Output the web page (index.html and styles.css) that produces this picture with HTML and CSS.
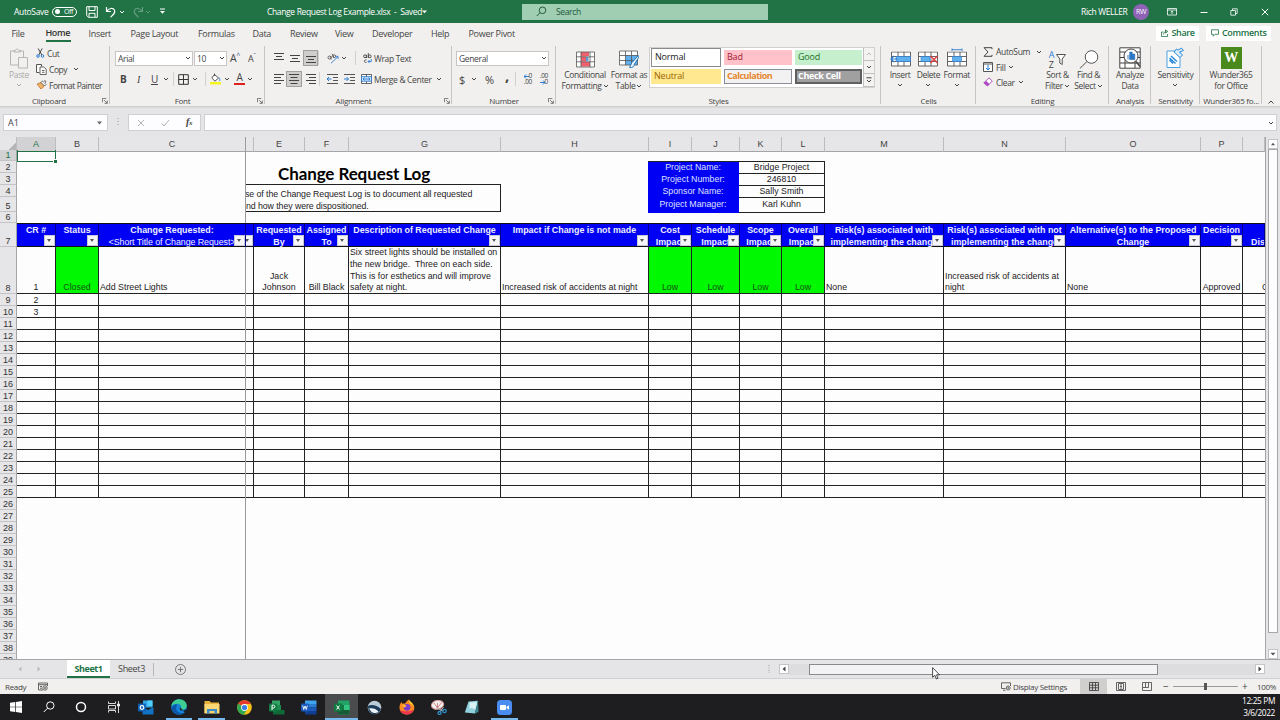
FILE: index.html
```html
<!DOCTYPE html>
<html lang="en">
<head>
    <meta charset="UTF-8">
    <meta name="viewport" content="width=device-width, initial-scale=1.0">
    <title>Change Request Log Example.xlsx</title>
    <link rel="stylesheet" href="styles.css">
</head>
<body>
    <svg class="defs" width="0" height="0">
        <symbol id="chev" viewBox="0 0 6 4"><path d="M1 1l2 2 2-2" fill="none" stroke="currentColor" stroke-width="1"/></symbol>
        <symbol id="launch" viewBox="0 0 7 7"><path d="M.5 5V.5H5M2.5 2.5l3.5 3.500M6.200 3v3.200H3" fill="none" stroke="#555" stroke-width=".9"/></symbol>
        <symbol id="cellgrid" viewBox="0 0 20 16"><path d="M.5 .5h19v14h-19zM.500 5h19M.5 10h19M7 .5v14M13 .5v14" fill="#fff" stroke="#555" stroke-width=".9"/></symbol>
    </svg>

    <div class="titlebar">
        <span class="t-autosave">AutoSave</span>
        <span class="toggle"><i></i>Off</span>
        <svg width="12" height="12" viewBox="0 0 12 12" fill="none" stroke="#fff"><path d="M.7.7h10.600v10.600H2.500L.7 9.500zM3 .7v3.800h6V.7M3 11V7.300h6V11"/></svg>
        <svg width="12" height="12" viewBox="0 0 12 12" fill="none" stroke="#fff" stroke-width="1.200"><path d="M1.500 1v4.500H6M1.800 5.200C4 2 8 1.500 9.500 4.200c1.200 2.500-1 4.300-4 7"/></svg>
        <svg class="chev" width="6" height="4"><use href="#chev"/></svg>
        <svg class="dim" width="12" height="12" viewBox="0 0 12 12" fill="none" stroke="#fff" stroke-width="1.200"><path d="M10.500 1v4.500H6M10.200 5.200C8 2 4 1.500 2.500 4.200c-1.200 2.500 1 4.300 4 7"/></svg>
        <svg class="chev dim" width="6" height="4"><use href="#chev"/></svg>
        <svg width="7" height="7" viewBox="0 0 7 7"><path d="M1 1h5" stroke="#fff"/><path d="M1 3h5L3.500 5.800z" fill="#fff"/></svg>
        <span class="t-name">Change Request Log Example.xlsx&nbsp; - &nbsp;Saved</span>
        <svg width="5" height="4" viewBox="0 0 5 4"><path d="M0 .5h5L2.500 3.200z" fill="#fff"/></svg>
        <div class="search">
            <svg width="11" height="11" viewBox="0 0 11 11" fill="none" stroke="#23583d"><circle cx="6.500" cy="4.300" r="3.300"/><path d="M4 6.800L.8 10"/></svg>
            <span>Search</span>
        </div>
        <span class="t-user">Rich WELLER</span>
        <span class="avatar">RW</span>
        <svg width="10" height="8" viewBox="0 0 10 8" fill="none" stroke="#fff"><path d="M.5.5h9v6.500h-9zM.5 2h9M5 6V3.200M3.700 4.300L5 3.100l1.300 1.200" stroke-width=".8"/></svg>
        <svg width="8" height="8" viewBox="0 0 8 8"><path d="M.5 4.500h7" stroke="#fff"/></svg>
        <svg width="8" height="8" viewBox="0 0 8 8" fill="none" stroke="#fff" stroke-width=".8"><path d="M.8 2.500h4.700v4.700H.8zM2.500 2.500V.8h4.700v4.700H5.500"/></svg>
        <svg width="8" height="8" viewBox="0 0 8 8"><path d="M.8.8l6.400 6.400M7.200.8L.8 7.200" stroke="#fff"/></svg>
    </div>

    <div class="tabs">
        <span>File</span><span class="active">Home</span><span>Insert</span><span>Page Layout</span><span>Formulas</span><span>Data</span><span>Review</span><span>View</span><span>Developer</span><span>Help</span><span>Power Pivot</span>
        <button class="share"><svg width="8" height="8" viewBox="0 0 8 8" fill="none" stroke="#217346" stroke-width=".8"><path d="M2.500 3H.5v4.500h6V5M2.500 5.500c0-2 1.500-3 3-3M4.500.8l2.300 1.700-2.300 1.700z"/></svg>Share</button>
        <button class="comments"><svg width="8" height="8" viewBox="0 0 8 8" fill="none" stroke="#217346" stroke-width=".8"><path d="M.5.8h7v4.500H4L2.200 7.200V5.300H.5z"/></svg>Comments</button>
    </div>

    <div class="ribbon">
        <div class="group g-clip">
            <div class="body">
                <div class="big paste">
                    <svg width="20" height="21" viewBox="0 0 20 21" fill="#f1f0ee" stroke="#b5b5b5"><path d="M1.500 3h13v14h-13z"/><path d="M5 4V2.500h1.500C7 .5 9.500.5 10 2.500h1.500V4z"/><path d="M9.500 9.500h9v10.500h-9z"/></svg>
                    <span>Paste</span>
                    <svg class="chev" width="6" height="4"><use href="#chev"/></svg>
                </div>
                <div class="lines">
                    <div><svg width="9" height="10" viewBox="0 0 9 10" fill="none"><path d="M2.200.5l3.600 6.500M6.200.5L2.700 7" stroke="#444"/><circle cx="2" cy="8" r="1.300" stroke="#2b7cd3"/><circle cx="6.500" cy="8" r="1.300" stroke="#2b7cd3"/></svg>Cut</div>
                    <div><svg width="11" height="11" viewBox="0 0 11 11" fill="#fff" stroke="#555"><path d="M3.500 8.500h-3v-8h5v2"/><path d="M4 3h3.800L10.200 5.300v5.200H4zM6 6.500h2.500M6 8.300h2.500" stroke-width=".9"/></svg>Copy<svg class="chev" width="6" height="4"><use href="#chev"/></svg></div>
                    <div><svg width="11" height="10" viewBox="0 0 11 10"><path d="M1 4l4 5 3.500-3L5 2.500z" fill="#f2b168" stroke="#b5651d" stroke-width=".7"/><path d="M5 2.500L8.500 6 10 4.500 8.800 3.300 10 1.500 9 .6 7.300 1.900 6.400 1z" fill="#fff" stroke="#444" stroke-width=".8"/></svg>Format Painter</div>
                </div>
            </div>
            <div class="caption">Clipboard<svg class="launch" width="6" height="6"><use href="#launch"/></svg></div>
        </div>

        <div class="group g-font">
            <div class="body">
                <div class="row font1">
                    <div class="combo">Arial<svg class="chev" width="6" height="4"><use href="#chev"/></svg></div>
                    <div class="combo">10<svg class="chev" width="6" height="4"><use href="#chev"/></svg></div>
                    <span class="grow">A<sup>^</sup></span><span class="grow small">A<sup>ˇ</sup></span>
                </div>
                <div class="row font2">
                    <b>B</b><i class="ital">I</i><u>U</u><svg class="chev" width="6" height="4"><use href="#chev"/></svg><em class="vsep"></em>
                    <svg width="11" height="11" viewBox="0 0 11 11" fill="none" stroke="#333"><path d="M.7.7h9.600v9.600H.7zM5.500.7v9.600M.7 5.500h9.600"/></svg>
                    <svg class="chev" width="6" height="4"><use href="#chev"/></svg><em class="vsep"></em>
                    <svg width="11" height="12" viewBox="0 0 11 12"><path d="M4.500 1.500l4 3.500-3.500 3.200L1.800 5zM4.500 3V.5" fill="#fff" stroke="#444" stroke-width=".9"/><path d="M9 4.500c1 1.500 1.200 3 .3 3.500" stroke="#2b7cd3" fill="none"/><path d="M0 9h11v2.500H0z" fill="#f5f51d"/></svg>
                    <svg class="chev" width="6" height="4"><use href="#chev"/></svg>
                    <span class="fcolor">A</span>
                    <svg class="chev" width="6" height="4"><use href="#chev"/></svg>
                </div>
            </div>
            <div class="caption">Font<svg class="launch" width="6" height="6"><use href="#launch"/></svg></div>
        </div>

        <div class="group g-align">
            <div class="body">
                <div class="row align1">
                    <span><svg width="10" height="12" viewBox="0 0 10 12" stroke="#444"><path d="M0 1.500h10M2 4.500h6M0 7.500h10"/></svg></span>
                    <span><svg width="10" height="12" viewBox="0 0 10 12" stroke="#444"><path d="M0 3.500h10M2 6.500h6M0 9.500h10"/></svg></span>
                    <span class="on"><svg width="10" height="12" viewBox="0 0 10 12" stroke="#444"><path d="M0 4.500h10M2 7.500h6M0 10.500h10"/></svg></span>
                    <em class="vsep"></em>
                    <span><svg width="12" height="11" viewBox="0 0 12 11" fill="none" stroke="#555" stroke-width=".9"><circle cx="2.500" cy="4.500" r="1.500"/><path d="M4 3v3.500M5 .8l2 4"/><circle cx="7.200" cy="3.200" r="1.400"/><path d="M4 10.300L11 3.500M8.500 3.300H11V6" stroke="#2b7cd3"/></svg></span>
                    <svg class="chev" width="6" height="4"><use href="#chev"/></svg><em class="vsep"></em>
                    <span class="txt"><svg width="9" height="11" viewBox="0 0 9 11" fill="none" stroke="#444" stroke-width=".9"><circle cx="2" cy="3.300" r="1.400"/><path d="M3.600 1.800v3.200M5.300 0v5"/><circle cx="6.800" cy="3.300" r="1.400"/><path d="M3.500 7C1 6.500 0 9.500 3.500 9.500"/><path d="M8.300 6v2.500H5M6.500 7L5 8.500 6.500 10" stroke="#2b7cd3"/></svg>Wrap Text</span>
                </div>
                <div class="row align2">
                    <span><svg width="10" height="11" viewBox="0 0 10 11" stroke="#444"><path d="M0 .5h10M0 3.500h7M0 6.500h10M0 9.500h7"/></svg></span>
                    <span class="on"><svg width="10" height="11" viewBox="0 0 10 11" stroke="#444"><path d="M0 .5h10M1.500 3.500h7M0 6.500h10M1.500 9.500h7"/></svg></span>
                    <span><svg width="10" height="11" viewBox="0 0 10 11" stroke="#444"><path d="M0 .5h10M3 3.500h7M0 6.500h10M3 9.500h7"/></svg></span>
                    <em class="vsep"></em>
                    <span><svg width="11" height="10" viewBox="0 0 11 10" fill="none" stroke="#555"><path d="M0 .5h11M6 3.500h5M6 6.500h5M0 9.500h11"/><path d="M0 5h4.500M2 3L0 5l2 2" stroke="#2b7cd3"/></svg></span>
                    <span><svg width="11" height="10" viewBox="0 0 11 10" fill="none" stroke="#555"><path d="M0 .5h11M6 3.500h5M6 6.500h5M0 9.500h11"/><path d="M0 5h4.500M2.500 3l2 2-2 2" stroke="#2b7cd3"/></svg></span>
                    <em class="vsep ghost"></em>
                    <span class="txt"><svg width="11" height="10" viewBox="0 0 11 10" fill="#fff" stroke="#555" stroke-width=".9"><path d="M.5.5h10v9H.5zM5.500.5v9"/><path d="M.5 2.700h10v4.500H.5z" fill="#d5e8f8" stroke="#2b7cd3"/><path d="M2 5h7M3.500 3.700L2 5l1.500 1.300M7.500 3.700L9 5 7.500 6.300" stroke="#2b7cd3" fill="none"/></svg>Merge &amp; Center</span>
                    <svg class="chev" width="6" height="4"><use href="#chev"/></svg>
                </div>
            </div>
            <div class="caption">Alignment<svg class="launch" width="6" height="6"><use href="#launch"/></svg></div>
        </div>

        <div class="group g-num">
            <div class="body">
                <div class="row num1"><div class="combo">General<svg class="chev" width="6" height="4"><use href="#chev"/></svg></div></div>
                <div class="row num2">
                    <span class="sym">$</span><svg class="chev" width="6" height="4"><use href="#chev"/></svg><span class="sym">%</span><span class="sym comma">,</span><em class="vsep"></em>
                    <span class="dec"><span><svg width="5" height="5" viewBox="0 0 5 5"><path d="M0 2.500h5M2 .5l-2 2 2 2" stroke="#2b7cd3" fill="none"/></svg>0</span><span>.00</span></span>
                    <span class="dec"><span>.00</span><span><svg width="5" height="5" viewBox="0 0 5 5"><path d="M0 2.500h5M3 .5l2 2-2 2" stroke="#2b7cd3" fill="none"/></svg>0</span></span>
                </div>
            </div>
            <div class="caption">Number<svg class="launch" width="6" height="6"><use href="#launch"/></svg></div>
        </div>

        <div class="group g-styles">
            <div class="body">
                <div class="big">
                    <svg width="19" height="16" viewBox="0 0 19 16"><path d="M.5.5h18v15H.5z" fill="#fff"/><path d="M5 .5h8v4H5zM5 5h5v5H5zM5 10.500h9v4.500H5z" fill="#f0616d"/><path d="M10 5.500h2.500v4H10z" fill="#5b9bd5"/><path d="M.5.5h18v15H.5zM.5 5.300h18M.5 10.300h18M5 .5v15M14 .5v15" fill="none" stroke="#555" stroke-width=".8"/></svg>
                    <span>Conditional</span><span>Formatting<svg class="chev" width="6" height="4"><use href="#chev"/></svg></span>
                </div>
                <div class="big">
                    <svg width="20" height="18" viewBox="0 0 20 18"><path d="M.5.5h18v14H.5z" fill="#fff"/><path d="M6.500 5h12v9.500h-12z" fill="#5fb0ee"/><path d="M.5.5h18v14H.5zM.5 5h18M.5 10h18M6.500.5v14M12.500.5v14" fill="none" stroke="#555" stroke-width=".8"/><path d="M19.300 5L13 12l-2.500 5c3 .5 5-1 4.800-3.300L20 6.500z" fill="#e9f4fd" stroke="#1d6fb8" stroke-width=".9"/></svg>
                    <span>Format as</span><span>Table<svg class="chev" width="6" height="4"><use href="#chev"/></svg></span>
                </div>
                <div class="gallery">
                    <div class="swatches">
                        <span class="normal">Normal</span><span class="bad">Bad</span><span class="good">Good</span>
                        <span class="neutral">Neutral</span><span class="calc">Calculation</span><span class="check">Check Cell</span>
                    </div>
                    <div class="spin">
                        <span class="off"><svg width="6" height="4" viewBox="0 0 6 4"><path d="M1 3l2-2 2 2" fill="none" stroke="currentColor"/></svg></span>
                        <span><svg width="6" height="4"><use href="#chev"/></svg></span>
                        <span><svg width="6" height="6" viewBox="0 0 6 6"><path d="M.5.800h5M1 3l2 2 2-2" fill="none" stroke="#444"/></svg></span>
                    </div>
                </div>
            </div>
            <div class="caption">Styles</div>
        </div>

        <div class="group g-cells">
            <div class="body">
                <div class="big">
                    <svg width="21" height="16" viewBox="0 0 21 16"><use href="#cellgrid" width="20" height="16" x="1"/><path d="M6 5h14.500v5H6z" fill="#5fb0ee" stroke="#2b7cd3" stroke-width=".6"/><path d="M7.500 7.500H1M4 4.500l-3 3 3 3" fill="none" stroke="#2b7cd3" stroke-width="1.200"/></svg>
                    <span>Insert</span><svg class="chev" width="6" height="4"><use href="#chev"/></svg>
                </div>
                <div class="big">
                    <svg width="20" height="16" viewBox="0 0 20 16"><use href="#cellgrid" width="20" height="16"/><path d="M3 5h9v5H3z" fill="#5fb0ee" stroke="#2b7cd3" stroke-width=".6"/><path d="M12.500 4.500l7 7M19.500 4.500l-7 7" stroke="#e23b3b" stroke-width="1.300"/></svg>
                    <span>Delete</span><svg class="chev" width="6" height="4"><use href="#chev"/></svg>
                </div>
                <div class="big up">
                    <svg width="20" height="19" viewBox="0 0 20 19"><use href="#cellgrid" width="20" height="16" y="3"/><path d="M5.500 8h9v5h-9z" fill="#5fb0ee" stroke="#2b7cd3" stroke-width=".6"/><path d="M5 1.200h10M5 0v2.500M15 0v2.500" stroke="#2b7cd3" stroke-width=".9"/></svg>
                    <span>Format</span><svg class="chev" width="6" height="4"><use href="#chev"/></svg>
                </div>
            </div>
            <div class="caption">Cells</div>
        </div>

        <div class="group g-edit">
            <div class="body">
                <div class="lines">
                    <div><svg width="10" height="10" viewBox="0 0 10 10" fill="none" stroke="#444"><path d="M9 2.200V.700H1L5 5 1 9.300h8V7.800"/></svg>AutoSum<svg class="chev far" width="6" height="4"><use href="#chev"/></svg></div>
                    <div><svg width="10" height="10" viewBox="0 0 10 10" fill="#fff" stroke="#555"><path d="M.5.5h9v9h-9z"/><path d="M.5 2h9" /><path d="M5 3v5M3 6l2 2 2-2" fill="none" stroke="#2b7cd3"/></svg>Fill<svg class="chev" width="6" height="4"><use href="#chev"/></svg></div>
                    <div><svg width="10" height="10" viewBox="0 0 10 10"><path d="M.8 6L6 .8 9.300 4 4.500 9z" fill="#fff" stroke="#a33fb5" stroke-width=".9"/><path d="M.8 6L3 3.800 6.500 7 4.500 9z" fill="#b04bc4"/></svg>Clear<svg class="chev" width="6" height="4"><use href="#chev"/></svg></div>
                </div>
                <div class="big sort">
                    <div class="az"><span><b>A</b><b>Z</b></span><svg width="10" height="12" viewBox="0 0 10 12"><path d="M.5.5h9L6.200 5v5.500L3.800 9V5z" fill="#fff" stroke="#555"/></svg></div>
                    <span>Sort &amp;</span><span>Filter<svg class="chev" width="6" height="4"><use href="#chev"/></svg></span>
                </div>
                <div class="big find">
                    <svg width="20" height="19" viewBox="0 0 20 19" fill="none" stroke="#555"><circle cx="12.500" cy="7" r="6.300" fill="#fff"/><path d="M8 11.500L.8 18.500"/></svg>
                    <span>Find &amp;</span><span>Select<svg class="chev" width="6" height="4"><use href="#chev"/></svg></span>
                </div>
            </div>
            <div class="caption">Editing</div>
        </div>

        <div class="group g-ana">
            <div class="body">
                <div class="big up">
                    <svg width="22" height="22" viewBox="0 0 22 22"><path d="M.8.8h20.400v20.400H.8zM.8 5h20.400M.8 10.500h20.400M.8 16h20.400M6 5v16M16 5v16" fill="#fff" stroke="#444"/><circle cx="12" cy="9" r="7" fill="#fff" stroke="#444"/><path d="M17 14.500l4 5" stroke="#444" stroke-width="1.500"/><path d="M8 8h2.500v4.500H8z" fill="#9bbfe0"/><path d="M10.700 5h2.500v7.500h-2.500zM13.500 7h2.300v5.500h-2.300z" fill="#2b7cd3" stroke="#185a9d" stroke-width=".5"/></svg>
                    <span>Analyze</span><span>Data</span>
                </div>
            </div>
            <div class="caption">Analysis</div>
        </div>

        <div class="group g-sens">
            <div class="body">
                <div class="big up">
                    <svg width="18" height="21" viewBox="0 0 18 21"><path d="M1 3.500h13v16.500H1z" fill="#fff" stroke="#4aa0e0"/><path d="M3.500 10.500l6 5.500M5 8.500l6 5.500M3.500 12.500L7 16" stroke="#2b8bd8" stroke-width="1.500"/><path d="M8 4.500l6 5.500 2.500-2.500-3-3L17.500 3 15.500.6l-3.500 2L10.500 1.500z" fill="#d9ecfb" stroke="#2b8bd8"/></svg>
                    <span>Sensitivity</span><svg class="chev" width="6" height="4"><use href="#chev"/></svg>
                </div>
            </div>
            <div class="caption">Sensitivity</div>
        </div>

        <div class="group g-wun">
            <div class="body">
                <div class="big up">
                    <div class="wlogo">W</div>
                    <span>Wunder365</span><span>for Office</span>
                </div>
            </div>
            <div class="caption">Wunder365 fo...</div>
        </div>
        <svg class="collapse" width="6" height="4" viewBox="0 0 6 4"><path d="M.5 3.500L3 1l2.500 2.500" fill="none" stroke="#444"/></svg>
    </div>

    <div class="formulabar">
        <div class="namebox">A1<svg width="5" height="4" viewBox="0 0 5 4"><path d="M0 .5h5L2.500 3.500z" fill="#666"/></svg></div>
        <svg class="dots" width="2" height="9" viewBox="0 0 2 9"><path d="M1 0v9" stroke="#999" stroke-dasharray="1 2"/></svg>
        <div class="fxbox">
            <svg width="8" height="8" viewBox="0 0 8 8"><path d="M1 1l6 6M7 1L1 7" stroke="#b5b5b5"/></svg>
            <svg width="9" height="8" viewBox="0 0 9 8"><path d="M.8 4.500L3 7l5-6" stroke="#b5b5b5" fill="none"/></svg>
            <i>f<small>x</small></i>
        </div>
        <div class="formula"><svg width="6" height="4"><use href="#chev"/></svg></div>
    </div>

    <div class="workarea">
        <div class="sheet">
            <div class="cols" id="colHeads"></div>
            <div class="top">
                <div class="topnums"><span class="sel">1</span><span>2</span><span>3</span><span>4</span><span>5</span><span>6</span></div>
                <div class="frozen"><div class="cursorcell"><i></i></div></div>
                <div class="intro">
                    <h1>Change Request Log</h1>
                    <p>se of the Change Request Log is to document all requested<br>nd how they were dispositioned.</p>
                </div>
                <div class="project">
                    <span>Project Name:</span><span>Bridge Project</span>
                    <span>Project Number:</span><span>246810</span>
                    <span>Sponsor Name:</span><span>Sally Smith</span>
                    <span>Project Manager:</span><span>Karl Kuhn</span>
                </div>
            </div>
            <div class="cols heads">
                <span class="num">7</span>
                <div>CR #<i class="filter"></i></div>
                <div>Status<i class="filter"></i></div>
                <div class="freeze">Change Requested:<br><span class="sub">&lt;Short Title of Change Request&gt;</span><i class="filter"></i></div>
                <div><i class="filter"></i></div>
                <div>Requested<br>By<i class="filter"></i></div>
                <div>Assigned<br>To<i class="filter"></i></div>
                <div>Description of Requested Change<i class="filter"></i></div>
                <div>Impact if Change is not made<i class="filter"></i></div>
                <div>Cost<br>Impact<i class="filter"></i></div>
                <div>Schedule<br>Impact<i class="filter"></i></div>
                <div>Scope<br>Impact<i class="filter"></i></div>
                <div>Overall<br>Impact<i class="filter"></i></div>
                <div>Risk(s) associated with<br>implementing the change<i class="filter"></i></div>
                <div>Risk(s) associated with not<br>implementing the change<i class="filter"></i></div>
                <div>Alternative(s) to the Proposed<br>Change<i class="filter"></i></div>
                <div>Decision<i class="filter"></i></div>
                <div class="last"><br>Disp</div>
            </div>
            <div class="cols line first">
                <span class="num">8</span>
                <div class="c">1</div>
                <div class="c green">Closed</div>
                <div class="freeze">Add Street Lights</div>
                <div></div>
                <div class="c">Jack<br>Johnson</div>
                <div class="c">Bill Black</div>
                <div>Six street lights should be installed on<br>the new bridge.&nbsp; Three on each side.<br>This is for esthetics and will improve<br>safety at night.</div>
                <div>Increased risk of accidents at night</div>
                <div class="c green">Low</div>
                <div class="c green">Low</div>
                <div class="c green">Low</div>
                <div class="c green">Low</div>
                <div>None</div>
                <div>Increased risk of accidents at<br>night</div>
                <div>None</div>
                <div class="c">Approved</div>
                <div class="last">C</div>
            </div>
            <div id="rows"></div>
        </div>
        <div class="vscroll">
            <span class="sbtn"><svg width="6" height="4" viewBox="0 0 6 4"><path d="M1 3.200h4L3 .8z" fill="#555"/></svg></span>
            <span class="vthumb"></span>
            <span class="sbtn"><svg width="6" height="4" viewBox="0 0 6 4"><path d="M.5.8h5L3 3.500z" fill="#555"/></svg></span>
        </div>
    </div>

    <div class="sheettabs">
        <div class="navs"><svg width="4" height="6" viewBox="0 0 4 6"><path d="M3.500.5v5L.5 3z" fill="#bbb"/></svg><svg width="4" height="6" viewBox="0 0 4 6"><path d="M.5.500v5l3-2.500z" fill="#bbb"/></svg></div>
        <span class="stab active">Sheet1</span>
        <span class="stab">Sheet3</span>
        <svg class="add" width="11" height="11" viewBox="0 0 11 11" fill="none" stroke="#777"><circle cx="5.500" cy="5.500" r="5"/><path d="M5.500 2.800v5.400M2.800 5.500h5.400"/></svg>
        <div class="hscroll">
            <svg width="2" height="8" viewBox="0 0 2 8"><path d="M1 0v8" stroke="#999" stroke-dasharray="1 1.500"/></svg>
            <span class="sbtn"><svg width="4" height="6" viewBox="0 0 4 6"><path d="M3.500.5v5L.5 3z" fill="#444"/></svg></span>
            <span class="htrack"><span class="hthumb"></span></span>
            <span class="sbtn"><svg width="4" height="6" viewBox="0 0 4 6"><path d="M.5.500v5l3-2.500z" fill="#444"/></svg></span>
        </div>
    </div>

    <div class="status">
        <span>Ready</span>
        <svg width="10" height="9" viewBox="0 0 10 9" fill="none" stroke="#555" stroke-width=".9"><path d="M5 8H.5V1h9v3M.5 2.700h9M2 4.500h2M2 6.200h2"/><circle cx="7" cy="6" r="2.200"/><circle cx="7" cy="6" r=".6"/></svg>
        <svg width="10" height="9" viewBox="0 0 10 9" fill="none" stroke="#555" stroke-width=".9"><path d="M4.500 6.500H.5V.8h9V4M2 8.300h2.500"/><circle cx="7.200" cy="6" r="2"/><circle cx="7.200" cy="6" r=".5"/></svg>
        <span>Display Settings</span>
        <span class="view on"><svg width="10" height="9" viewBox="0 0 10 9" fill="none" stroke="#444" stroke-width=".9"><path d="M.5.5h9v8h-9zM.5 3.200h9M.5 5.800h9M3.500.5v8M6.500.5v8"/></svg></span>
        <span class="view"><svg width="10" height="9" viewBox="0 0 10 9" fill="none" stroke="#555" stroke-width=".9"><path d="M.5.5h9v8h-9zM2.500 1.500h5v6h-5zM4 3h2M4 4.500h2M4 6h2"/></svg></span>
        <span class="view"><svg width="10" height="9" viewBox="0 0 10 9" fill="none" stroke="#555" stroke-width=".9"><path d="M.5.5h9v8h-9zM3.500.5v5M6.500.5v5M.5 5.500h6"/></svg></span>
        <span class="zoombtn">−</span>
        <span class="slider"><i></i></span>
        <span class="zoombtn">+</span>
        <span>100%</span>
    </div>

    <div class="taskbar">
        <span><svg width="12" height="12" viewBox="0 0 12 12" fill="#fff"><path d="M0 1.700l5.300-.7v4.700H0zM6 .9L12 0v5.700H6zM0 6.300h5.300V11L0 10.300zM6 6.300h6V12l-6-.9z"/></svg></span>
        <span><svg width="12" height="12" viewBox="0 0 12 12" fill="none" stroke="#fff"><circle cx="7.300" cy="4.500" r="3.700"/><path d="M4.600 7.200L.8 11"/></svg></span>
        <span><svg width="12" height="12" viewBox="0 0 12 12"><circle cx="6" cy="6" r="4.500" fill="none" stroke="#fff" stroke-width="1.500"/></svg></span>
        <span><svg width="12" height="12" viewBox="0 0 12 12" fill="none" stroke="#eee" stroke-width=".9"><path d="M.5.500v2h7v-2M.5 4.500h7v3.500h-7zM.5 11.500v-2h7v2M10.500 0v12"/><path d="M9.500 3h2v2h-2z" fill="#eee"/></svg></span>
        <span><svg width="16" height="15" viewBox="0 0 16 15"><path d="M5 .5h9.500v7H5z" fill="#35a7e8"/><path d="M9.500.5h5V6h-5z" fill="#50d0ff"/><path d="M4.500 7L10 10l5.500-3v7.500h-11z" fill="#1173c4"/><rect y="3.500" width="8" height="8" rx="1" fill="#0f62b5"/><circle cx="4" cy="7.500" r="1.800" fill="none" stroke="#fff" stroke-width="1.200"/></svg></span>
        <span class="open"><svg width="16" height="16" viewBox="0 0 16 16"><circle cx="8" cy="8" r="7.800" fill="#1683d8"/><path d="M.3 7C1 2.500 4.500.2 8.300.2c4.500 0 7.500 3.300 7.500 6.300 0 2.800-2 4-4 4-1.500 0-2.300-.5-2-1.200C11 7 9 4.800 6.300 4.800 3.500 4.800 1 6 .3 7z" fill="#3ccf91"/><path d="M5.500 7.500C4 11 7 15 12.500 14.200 9 17 2.500 15.500 1 10.500.500 7.500 3 5.300 6 5.300c-.5.700-.5 1.500-.5 2.200z" fill="#0b56a6"/><path d="M8.500 7.500c.8.8.6 2 .2 2.800 1 1.500 4 1.700 6.300.2.500 1-.5 2-1.500 2.700" fill="#1e1d1f"/></svg></span>
        <span class="open"><svg width="16" height="14" viewBox="0 0 16 14"><path d="M.5 1h5l1.500 1.500h8V13H.5z" fill="#e8b33a"/><path d="M.5 4h15v9.500H.5z" fill="#fbd873"/><path d="M3 13.500V9h10v4.500h-2.500V11h-5v2.500z" fill="#3c8ccc"/></svg></span>
        <span><svg width="15" height="15" viewBox="0 0 15 15"><circle cx="7.500" cy="7.500" r="7.300" fill="#fbc116"/><path d="M7.500 7.500L1.200 3.800A7.300 7.300 0 0 1 13.900 4H7.500z" fill="#e33b2e"/><path d="M7.500 7.500L1.200 3.800A7.300 7.300 0 0 0 6.800 14.800l3.200-5z" fill="#2da94f"/><circle cx="7.500" cy="7.500" r="3.400" fill="#fff"/><circle cx="7.500" cy="7.500" r="2.600" fill="#3b7de8"/></svg></span>
        <span><svg width="16" height="15" viewBox="0 0 16 15"><path d="M3 .5h8v5H3z" fill="#33a366"/><path d="M7 5h5v5H7z" fill="#1f8a4f"/><path d="M4 10h11.500v4.500H4z" fill="#0f6a38"/><rect y="3.500" width="8" height="8" rx="1" fill="#107c41"/><path d="M3 10V5.200h1.500a1.300 1.300 0 0 1 0 2.800H3" fill="none" stroke="#fff"/></svg></span>
        <span><svg width="16" height="15" viewBox="0 0 16 15"><path d="M4 .5h11.500V4H4z" fill="#41a5ee"/><path d="M4 4h11.500v3.500H4z" fill="#2b7cd3"/><path d="M4 7.500h11.500V11H4z" fill="#185abd"/><path d="M4 11h11.500v3.500H4z" fill="#103f91"/><rect y="3.500" width="8" height="8" rx="1" fill="#185abd"/><path d="M1.700 5.500l1 4L4 6l1.300 3.500 1-4" fill="none" stroke="#fff" stroke-width=".9"/></svg></span>
        <span class="open current"><svg width="16" height="15" viewBox="0 0 16 15"><path d="M4 .5h11.500v14H4z" fill="#21a366"/><path d="M4 5h6v5H4z" fill="#107c41"/><path d="M10 5h5.500v5H10z" fill="#33c481"/><path d="M4 10h11.500v4.500H4z" fill="#185c37"/><rect y="3.500" width="8" height="8" rx="1" fill="#107c41"/><path d="M2.500 5.500l3 4M5.500 5.500l-3 4" stroke="#fff"/></svg></span>
        <span><svg width="15" height="15" viewBox="0 0 15 15"><circle cx="7.500" cy="7.500" r="6.800" fill="#b9cdd8"/><path d="M1 6c3-2 9-1 13 3-1 3-4 5.300-7 5.200C3.500 14 1 11 1 6z" fill="#1d3c5a"/><path d="M2 8.500c3-1 7 0 9.500 3-2 2-5 2-7 .5z" fill="#e9f2f6"/></svg></span>
        <span><svg width="16" height="16" viewBox="0 0 16 16"><path d="M8 15.500C3.500 15.500.5 12.500.5 8.500c0-2.500 1-4.500 2-5.500l1 2c1-.5 2-.5 2.500-.3C7 3 8.500 1 10 .5c0 2 4.800 3.500 5.300 8 .2 4-3.300 7-7.300 7z" fill="#ff8a1e"/><path d="M1 11c1 3 4 4.500 7 4.500s6-2 7-5c-3 2-10 2.500-14 .5z" fill="#f0374f"/><circle cx="8" cy="8.300" r="3.400" fill="#7a3bd0"/><path d="M3.500 5.500c1.500 0 3 .5 4 1.500-1 1-2 1.500-3 1.500z" fill="#ffc32e"/><path d="M10 .5c0 2 5 3.500 5.300 8-1-2-2-3-3.300-3.500C10.500 4 9.500 2.500 10 .5z" fill="#ffd83a"/></svg></span>
        <span><svg width="16" height="15" viewBox="0 0 16 15"><ellipse cx="6.500" cy="4.800" rx="6.200" ry="4.300" fill="#f3f0f0" stroke="#d99a9a" transform="rotate(-12 6.500 4.800)"/><path d="M6.500 8.500V3M6.500 8L3 3M6.500 8l4-5.500" stroke="#c55" stroke-width=".7"/><path d="M5 7.500l7 3.500M12.500 7L9 12" stroke="#bbb"/><circle cx="13.500" cy="11" r="1.700" fill="none" stroke="#2f8fc9" stroke-width="1.300"/><circle cx="8.500" cy="13" r="1.500" fill="none" stroke="#2f8fc9" stroke-width="1.300"/></svg></span>
        <span><svg width="15" height="15" viewBox="0 0 15 15"><path d="M4.500 1.500L14 .8l-3 12.700L.8 12.500z" fill="#8fd0dc"/><path d="M5.500 2.500l7.500-.5-1.500 7c-2.500 0-5-3-6 1z" fill="#d9f1f4"/><path d="M14 .8l.5 11-3.500 2z" fill="#3d8494"/></svg></span>
        <span class="open"><svg width="15" height="15" viewBox="0 0 15 15"><rect width="15" height="15" rx="3.500" fill="#4a8cf0"/><rect x="3" y="5" width="6" height="5" rx="1" fill="#fff"/><path d="M9.500 7l2.500-1.800v4.600L9.500 8z" fill="#fff"/></svg></span>
        <div class="clock">12:25 PM<br>3/6/2022</div>
    </div>

    <svg class="pointer" width="9" height="13" viewBox="0 0 9 13"><path d="M.6.600v9.700l2.300-2 1.500 3.700 1.600-.7-1.500-3.500h3z" fill="#fff" stroke="#222" stroke-width=".8"/></svg>

    <script src="script.js"></script>
</body>
</html>
```

FILE: script.js
```js
// column letters, D is scrolled almost out of view
const letters = ['', 'A', 'B', 'C', '', 'E', 'F', 'G', 'H', 'I', 'J', 'K', 'L', 'M', 'N', 'O', 'P', ''];
const heads = document.getElementById('colHeads');
letters.forEach((l, i) => {
    const s = document.createElement('span');
    s.className = 'colhead' + (l === 'A' ? ' sel' : '') + (i === 0 ? ' corner' : '') + (l === 'C' ? ' freeze' : '');
    s.textContent = l;
    heads.appendChild(s);
});

// bordered rows 9-25, then the empty ones
const rows = document.getElementById('rows');
for (let n = 9; n <= 39; n++) {
    const row = document.createElement('div');
    row.className = 'cols ' + (n <= 25 ? 'line' : 'blank');
    let html = `<span class="num">${n}</span>`;
    for (let c = 1; c < letters.length; c++) {
        const text = c === 1 && n <= 10 ? n - 7 : '';
        const cls = c === 1 ? 'c' : (c === 3 ? 'freeze' : (c === 17 ? 'last' : ''));
        html += `<div class="${cls}">${text}</div>`;
    }
    row.innerHTML = html;
    rows.appendChild(row);
}
```

FILE: styles.css
```css
* { box-sizing: border-box; }
body {
    margin: 0;
    width: 1280px;
    height: 720px;
    overflow: hidden;
    font: 8.5px/11px "Open Sans", "Noto Sans", sans-serif;
    letter-spacing: -0.35px;
    color: #444;
    background: #e5e4e6;
    display: flex;
    flex-direction: column;
}
svg { display: block; flex: none; }
.defs { position: absolute; }
.dim { opacity: .3; }
.chev { color: #444; }

/* title bar */
.titlebar {
    height: 23px;
    flex: none;
    background: #217346;
    color: #fff;
    display: grid;
    grid-template-columns: 38px 34px 19px 14px 13px 13px 14px 108px 155px 100px 559px 52px 34px 33px 30px 31px 16px;
    align-items: center;
    padding-left: 14px;
    white-space: nowrap;
}
.titlebar .chev { color: #fff; }
.toggle {
    width: 25px;
    height: 10px;
    border: 1px solid #fff;
    border-radius: 5px;
    font-size: 7px;
    line-height: 8px;
    padding-left: 2px;
    display: flex;
    align-items: center;
    gap: 4px;
}
.toggle i { width: 5px; height: 5px; border-radius: 50%; background: #fff; }
.search {
    width: 246px;
    height: 16px;
    background: #9fceb2;
    color: #23583d;
    display: flex;
    align-items: center;
    gap: 9px;
    padding-left: 14px;
}
.avatar {
    width: 16px;
    height: 16px;
    border-radius: 50%;
    background: #8e62b5;
    font-size: 7px;
    line-height: 16px;
    text-align: center;
}

/* ribbon tabs */
.tabs {
    height: 20px;
    flex: none;
    background: #f1f0ee;
    display: grid;
    grid-template-columns: 34px 43px 42px 67.5px 54.5px 37.5px 45px 37px 59px 37.5px 687px 50.5px 65px;
    align-items: center;
    padding-left: 11.5px;
    font-size: 9px;
    letter-spacing: -.3px;
    white-space: nowrap;
}
.tabs .active {
    color: #333;
    font-weight: 600;
    width: 25px;
    height: 18px;
    line-height: 18px;
    border-bottom: 2px solid #217346;
    letter-spacing: -.4px;
}
.tabs button {
    font: 600 9px/14px "Open Sans", sans-serif;
    letter-spacing: -.35px;
    color: #217346;
    background: #fff;
    border: 0;
    height: 15px;
    padding: 0 0 0 5px;
    display: flex;
    align-items: center;
    gap: 3px;
}
.share { width: 43px; }
.comments { width: 65px; }

/* ribbon */
.ribbon {
    height: 64px;
    flex: none;
    background: #f1f0ee;
    border-bottom: 1px solid #d0cfce;
    display: flex;
    white-space: nowrap;
}
.group {
    flex: none;
    position: relative;
    display: flex;
    flex-direction: column;
}
.group::after {
    content: "";
    position: absolute;
    right: 0;
    top: 3px;
    width: 1px;
    height: 58px;
    background: #c8c6c4;
}
.body { height: 52px; flex: none; display: flex; }
.caption { text-align: center; position: relative; line-height: 12px; font-size: 8px; letter-spacing: -.25px; }
.launch { position: absolute; right: 2px; top: 3px; }
.g-clip { width: 110px; }
.g-font { width: 155px; }
.g-align { width: 187px; }
.g-num { width: 104px; }
.g-styles { width: 325px; }
.g-cells { width: 95px; }
.g-edit { width: 133px; }
.g-ana { width: 42px; }
.g-sens { width: 49px; }
.g-wun { width: 62px; }
.g-clip .caption { padding-right: 12px; }
.g-font .caption, .g-align .caption { padding-right: 10px; }
.collapse { margin: 57px 0 0 6px; }

.big {
    display: flex;
    flex-direction: column;
    align-items: center;
    padding-top: 7px;
}
.big > svg:first-child, .az { height: 19px; margin-bottom: 0; }
.big.up { padding-top: 4px; }
.big.up > svg:first-child, .big.up > .wlogo { height: 22px; margin-bottom: 0; }
.big > span { display: flex; align-items: center; gap: 1px; line-height: 11px; }
.big > .chev { margin-top: 3px; }
.lines { display: flex; flex-direction: column; }
.lines > div { height: 16px; display: flex; align-items: center; gap: 2px; }
.lines .chev { margin-left: 4px; }

.paste { width: 24px; margin-left: 7px; color: #aaa; }
.big.paste { padding-top: 5px; }
.big.paste > svg:first-child { height: 21px; }
.paste .chev { color: #aaa; }
.g-clip .lines { margin-left: 5px; padding-top: 2px; }
.g-clip .lines > div { letter-spacing: -.45px; }

.g-font .body, .g-align .body, .g-num .body { flex-direction: column; }
.row { display: grid; align-items: center; }
.combo {
    height: 15px;
    border: 1px solid #c8c6c4;
    background: #fff;
    padding: 0 1px 0 2px;
    display: flex;
    align-items: center;
    justify-content: space-between;
}
.vsep { width: 1px; height: 14px; background: #d2d0ce; }
.vsep.ghost { background: none; }
.font1, .align1, .num1 { margin-top: 7px; height: 16px; }
.font2, .align2, .num2 { margin-top: 5px; height: 16px; }
.font1 { grid-template-columns: 78px 33px 17px 12px; column-gap: 1px; padding-left: 5px; }
.font1 .grow { font-size: 10.5px; padding-left: 2px; }
.font1 .small { font-size: 9px; }
.grow sup { font-size: 7px; vertical-align: 4px; line-height: 0; color: #2b5c94; }
.font2 { grid-template-columns: 17px 14px 12px 10px 5px 14px 13px 5px 14px 10px 13px 6px; padding-left: 10px; font-size: 10px; }
.ital { font-family: "Liberation Serif", serif; }
.fcolor { width: 11px; line-height: 9px; height: 12px; text-align: center; border-bottom: 2.5px solid #e02020; }

.align1 { grid-template-columns: 16px 16px 15px 6px 17px 14px 5px 60px; padding-left: 6px; }
.align2 { grid-template-columns: 15px 16px 17px 5px 17px 17px 3px 75px 6px; padding-left: 6px; }
.align1 > span, .align2 > span { height: 16px; display: flex; align-items: center; justify-content: center; }
.row > .on { background: #cfcecd; border: 1px solid #a0a0a0; }
.row > .txt { justify-content: flex-start; gap: 2px; }
.align1 .txt { padding-left: 3px; }

.num1 { padding-left: 4px; grid-template-columns: 93px; }
.num2 { padding-left: 7px; grid-template-columns: 12px 14px 18px 12px 5px 16px 16px; }
.sym { font-size: 11px; }
.comma { font-weight: 700; font-size: 15px; line-height: 0; margin-top: -8px; padding-left: 2px; }
.dec { display: flex; flex-direction: column; align-items: flex-end; width: 12px; font-size: 6.5px; line-height: 6px; letter-spacing: -.3px; }
.dec span { display: flex; align-items: center; }

.g-styles .big { width: 46px; }
.g-styles .big:first-child { margin-left: 6px; width: 46px; }
.g-styles .big:nth-child(2) { width: 42px; }
.gallery {
    width: 226px;
    height: 41px;
    margin-top: 4px;
    margin-left: -1px;
    background: #fff;
    border: 1px solid #d2d0ce;
    display: flex;
    justify-content: space-between;
}
.swatches {
    display: grid;
    grid-template-columns: 70px 68px 67px;
    grid-template-rows: 19px 15px;
    column-gap: 3px;
    row-gap: 2px;
    align-items: center;
    padding: 0 0 0 1px;
    font-size: 9px;
    letter-spacing: -.2px;
}
.swatches span { height: 15px; line-height: 14px; padding-left: 3px; }
.swatches .normal { height: 19px; line-height: 16px; border: 1.5px solid #8a8a8a; color: #222; }
.bad { background: #ffc1ca; color: #a3182a; }
.good { background: #c6efce; color: #1a7125; }
.neutral { background: #ffe88f; color: #9c6500; }
.swatches .calc { background: #f2f2f2; color: #e8872e; font-weight: 700; border: 1px solid #8a8f99; line-height: 12px; letter-spacing: -.5px; padding-left: 2px; }
.swatches .check { background: #a0a0a0; color: #fff; font-weight: 700; border: 2px solid #606060; line-height: 10px; padding-left: 1px; letter-spacing: -.35px; }
.spin { width: 11px; display: flex; flex-direction: column; background: #f4f3f2; }
.spin span { flex: 1; border-left: 1px solid #c0c0c0; border-bottom: 1px solid #c0c0c0; display: flex; align-items: center; justify-content: center; }
.spin .off { color: #bbb; }

.g-cells .body { padding-left: 5px; }
.g-cells .big { width: 28.300px; }

.g-edit .lines { width: 66px; padding: 1px 0 0 7px; }
.g-edit .lines > div { height: 15.400px; gap: 3px; }
.g-edit .lines .chev { margin-left: 0; }
.g-edit .lines .far { margin-left: 3px; }
.g-edit .big { width: 31px; }
.az { display: flex; align-items: center; gap: 2px; }
.az span { display: flex; flex-direction: column; }
.az b { font: 9px/10px "Open Sans", sans-serif; color: #444; }
.az b:first-child { color: #2b7cd3; }
.g-ana .body, .g-sens .body, .g-wun .body { justify-content: center; }
.wlogo {
    width: 21px;
    background: #4a8a1c;
    color: #fff;
    font: 700 14px/21px "Liberation Serif", serif;
    text-align: center;
}

/* formula bar */
.formulabar { height: 30px; flex: none; display: flex; align-items: center; padding: 0 0 0 3px; border-top: 1px solid #dad9db; }
.namebox {
    width: 105px;
    height: 17px;
    background: #fdfcfe;
    border: 1px solid #d0cfd1;
    padding: 0 5px 0 4px;
    font-size: 9px;
    letter-spacing: 0;
    display: flex;
    align-items: center;
    justify-content: space-between;
}
.dots { margin: 0 9px; }
.fxbox { width: 73px; height: 17px; background: #fdfcfe; border: 1px solid #d0cfd1; display: flex; align-items: center; padding-left: 8px; gap: 16px; }
.fxbox i { font: italic 700 10px/14px "Liberation Serif", serif; }
.fxbox small { font-size: 7px; }
.formula { width: 1073px; height: 17px; margin-left: 3px; background: #fdfcfe; border: 1px solid #d0cfd1; display: flex; align-items: center; justify-content: flex-end; padding-right: 2px; }

/* worksheet */
.workarea { height: 523px; flex: none; display: flex; border-bottom: 1px solid #a5a4a6; }
.sheet {
    width: 1266px;
    height: 522px;
    overflow: hidden;
    background: #fefdfe;
    border-right: 1px solid #a5a4a6;
    font: 8.800px/12px "Liberation Sans", Arial, sans-serif;
    letter-spacing: 0;
    color: #222;
}
.cols {
    display: grid;
    grid-template-columns: 17px 39px 43px 147px 8px 51px 44px 152px 148px 43px 48px 42px 43px 119px 122px 135px 42px 22px;
    height: 12px;
    white-space: nowrap;
}
#colHeads { height: 13px; }
.colhead { background: #e6e5e7; border-right: 1px solid #bdbcbe; border-bottom: 1px solid #a5a4a6; text-align: center; color: #444; font-size: 9px; line-height: 14px; }
.colhead.sel { background: #d2d1d3; color: #217346; border-bottom: 1px solid #217346; }
.colhead.corner { background: linear-gradient(135deg, #e6e5e7 70%, #b5b4b6 70%); }
.num, .topnums span {
    background: #e6e5e7;
    border-right: 1px solid #a5a4a6;
    border-bottom: 1px solid #c4c3c5;
    text-align: center;
    color: #333;
    font-size: 9px;
    display: flex;
    align-items: flex-end;
    justify-content: center;
    line-height: 9px;
}
.cols > div { position: relative; display: flex; align-items: flex-end; padding-left: 1px; overflow: hidden; }
.line > div { border-right: 1px solid #222; box-shadow: inset 0 -1px #222; line-height: 11.5px; }
.line > div.c { justify-content: center; text-align: center; padding: 0; }
.cols > div.freeze, .colhead.freeze { border-right: 1px solid #9a999b; }
.cols > div.last { border-right: 0; }
.line > div.green { background: #00f800; color: #145214; }
.first { height: 47px; }
.first > div { line-height: 11.700px; }
.first > .last { padding-left: 19px; }

.top { height: 73px; display: flex; }
.topnums { width: 17px; display: grid; grid-template-rows: 11px 12px 12px 12px 15px 11px; }
.topnums .sel { background: #d2d1d3; color: #217346; }
.frozen { width: 229px; border-right: 1px solid #9a999b; }
.cursorcell { position: relative; width: 39px; height: 12px; border: 1px solid #217346; border-width: 0 1.5px 1.5px 1px; }
.cursorcell i { position: absolute; right: -2px; bottom: -2px; width: 4px; height: 4px; background: #217346; border: 1px solid #fff; border-width: 1px 0 0 1px; }
.intro { width: 255px; overflow: hidden; }
.intro h1 { margin: 0; height: 34px; padding: 15px 0 0 32px; font: 700 17px/18px Lato, sans-serif; letter-spacing: -.1px; color: #000; white-space: nowrap; }
.intro p { margin: 0; height: 28px; border: 1px solid #222; border-left: 0; padding-top: 3px; line-height: 12px; white-space: nowrap; text-indent: -1px; letter-spacing: -.08px; }
.project {
    margin: 11px 0 0 147px;
    width: 177px;
    height: 51px;
    display: grid;
    grid-template-columns: 91px 86px;
    grid-template-rows: 12px 12px 12px 15px;
    border-top: 1px solid #222;
    text-align: center;
}
.project span { border-right: 1px solid #222; border-bottom: 1px solid #222; line-height: 11px; }
.project span:nth-child(odd) { background: #0000f5; color: #dfe2ff; border-color: #0000f5; }
.project span:nth-child(n+7) { line-height: 13px; }

.heads { height: 24px; }
.cols.heads > div {
    display: block;
    background: #0000f5;
    color: #eef;
    font-size: 8.9px;
    font-weight: 700;
    text-align: center;
    border-top: 1px solid #111;
    border-right: 1px solid #00008a;
    box-shadow: inset 0 -1px #111;
    padding: 0;
}
.heads .sub { font-weight: 400; letter-spacing: -.08px; }
.heads .filter {
    position: absolute;
    right: 0;
    bottom: 1px;
    width: 11px;
    height: 11px;
    background: #f6f6fa;
    border: 1px solid #c8c8d8;
}
.heads .filter::after {
    content: "";
    position: absolute;
    left: 2px;
    top: 3px;
    border: 2.5px solid transparent;
    border-top: 3px solid #555;
    border-bottom: 0;
}
.cols.heads > div.last { text-align: left; padding-left: 8px; }

.vscroll { width: 14px; padding: 2px 2px 0 2px; display: flex; flex-direction: column; }
.sbtn { width: 10px; height: 10px; background: #fff; border: 1px solid #c4c3c5; display: flex; align-items: center; justify-content: center; flex: none; }
.vthumb { height: 485px; background: #fdfcfe; border: 1px solid #a5a4a6; margin-bottom: 16px; }

/* sheet tabs */
.sheettabs { height: 19px; flex: none; display: flex; align-items: center; border-bottom: 1px solid #d0cfd1; }
.navs { width: 67px; display: flex; gap: 15px; padding-left: 18px; }
.stab { font-size: 9px; padding: 0 9px; letter-spacing: -.3px; }
.stab.active { width: 43px; height: 18px; padding: 0; text-align: center; background: #fff; color: #217346; font-weight: 700; line-height: 17px; border-bottom: 2px solid #217346; align-self: flex-start; letter-spacing: -.4px; }
.stab + .stab { width: 44px; height: 13px; line-height: 12px; padding-left: 8px; border-right: 1px solid #b5b4b6; }
.add { margin-left: 21px; }
.hscroll { margin-left: auto; width: 512px; padding-right: 15px; display: flex; align-items: center; }
.hscroll .sbtn:nth-child(2) { margin-left: 9px; }
.htrack { flex: 1; height: 11px; padding-left: 20px; background: #dddcde; }
.hthumb { display: block; width: 349px; height: 11px; background: #f3f2f5; border: 1px solid #8a898b; }

/* status bar */
.status {
    height: 15px;
    flex: none;
    background: #f1f0ee;
    display: grid;
    grid-template-columns: 33px 963px 12px 67px 27px 26px 30px 10px 69px 15px 20px;
    align-items: center;
    padding-left: 5px;
    font-size: 8px;
    letter-spacing: -.3px;
    white-space: nowrap;
}
.view { height: 15px; width: 27px; display: flex; align-items: center; justify-content: center; }
.view.on { background: #d0cfce; }
.zoombtn { font-size: 10px; }
.slider { width: 65px; height: 1px; background: #999; display: flex; align-items: center; justify-content: center; }
.slider i { width: 3px; height: 7px; background: #555; flex: none; }

/* taskbar */
.taskbar { height: 26px; flex: 1; background: #1e1d1f; display: flex; color: #fff; }
.taskbar > span { width: 32.550px; flex: none; display: flex; align-items: center; justify-content: center; position: relative; }
.taskbar .current { background: #4a4b4c; }
.taskbar .open::after { content: ""; position: absolute; left: 3px; right: 3px; bottom: 0; height: 2px; background: #76b9ed; }
.taskbar .current::after { left: 0; right: 0; }
.clock { margin-left: auto; padding: 1px 5px 0 0; text-align: right; line-height: 12px; font-size: 8.3px; }

.pointer { position: absolute; left: 932px; top: 667px; }
```
